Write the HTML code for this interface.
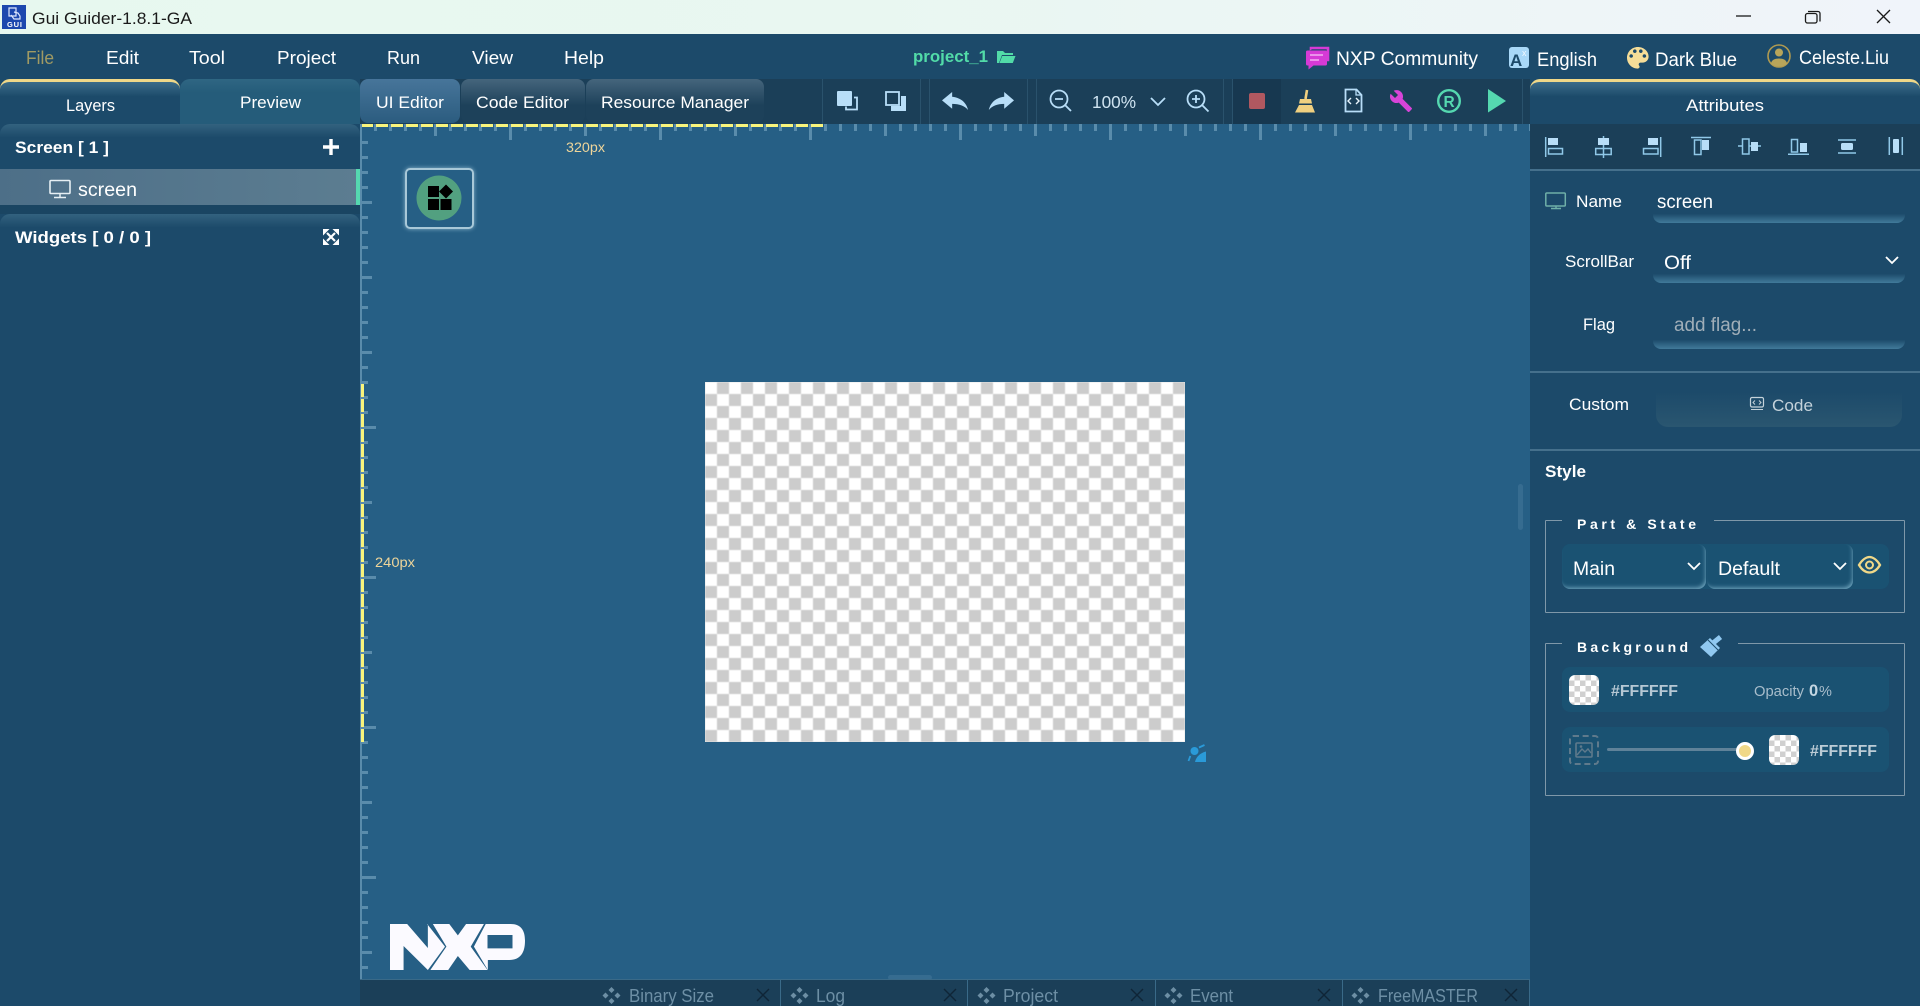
<!DOCTYPE html>
<html lang="en"><head><meta charset="utf-8"><title>Gui Guider-1.8.1-GA</title>
<style>
*{box-sizing:border-box}
html,body{margin:0;padding:0;width:1920px;height:1006px;overflow:hidden;background:#265f85;font-family:"Liberation Sans",sans-serif}
.b{position:absolute}
svg{position:absolute;left:0;top:0}
text{font-family:"Liberation Sans",sans-serif;fill:#fff}
.tk{background-repeat:no-repeat}
</style></head><body>
<div class="b" style="left:0;top:0;width:1920px;height:34px;background:linear-gradient(90deg,#e7f8ef 0,#e9f7f1 45%,#f0f4fa 100%)"></div>
<div class="b" style="left:0;top:34px;width:1920px;height:46px;background:#1c4a6a"></div>
<!-- canvas -->
<div class="b" style="left:360px;top:124px;width:1170px;height:855px;background:#265f85"></div>
<!-- toolbar -->
<div class="b" style="left:360px;top:79px;width:1170px;height:45px;background:#1b3f58"></div>
<div class="b" style="left:1233px;top:79px;width:48px;height:45px;background:#173850"></div>
<div class="b" style="left:360px;top:79px;width:100px;height:44px;border-radius:8px;background:linear-gradient(#47759a,#2b5c7f)"></div>
<div class="b" style="left:461px;top:79px;width:124px;height:44px;border-radius:8px;background:linear-gradient(#45657c 0,#1d415a 60%)"></div>
<div class="b" style="left:586px;top:79px;width:178px;height:44px;border-radius:8px;background:linear-gradient(#45657c 0,#1d415a 60%)"></div>
<div class="b" style="left:822px;top:79px;width:1px;height:45px;background:#2a526c"></div>
<div class="b" style="left:920px;top:79px;width:1px;height:45px;background:#2a526c"></div>
<div class="b" style="left:929px;top:79px;width:1px;height:45px;background:#2a526c"></div>
<div class="b" style="left:1027px;top:79px;width:1px;height:45px;background:#2a526c"></div>
<div class="b" style="left:1036px;top:79px;width:1px;height:45px;background:#2a526c"></div>
<div class="b" style="left:1223px;top:79px;width:1px;height:45px;background:#2a526c"></div>
<div class="b" style="left:1232px;top:79px;width:1px;height:45px;background:#2a526c"></div>
<div class="b" style="left:1522px;top:79px;width:1px;height:45px;background:#2a526c"></div>
<!-- rulers -->
<div class="b" style="left:359px;top:124px;width:1171px;height:7px;background:repeating-linear-gradient(90deg,#5a8cab 0 3px,transparent 3px 15px)"></div>
<div class="b" style="left:434px;top:124px;width:1096px;height:12px;background:repeating-linear-gradient(90deg,#5a8cab 0 3px,transparent 3px 75px)"></div>
<div class="b" style="left:509px;top:124px;width:1021px;height:16px;background:repeating-linear-gradient(90deg,#5a8cab 0 3px,transparent 3px 150px)"></div>
<div class="b" style="left:361px;top:124px;width:463px;height:3px;background:repeating-linear-gradient(90deg,#f8f47c 0 12px,transparent 12px 15px)"></div>
<div class="b" style="left:360px;top:124px;width:2px;height:855px;background:#5a8cab"></div>
<div class="b" style="left:360px;top:141px;width:8px;height:838px;background:repeating-linear-gradient(180deg,#5a8cab 0 3px,transparent 3px 15px)"></div>
<div class="b" style="left:360px;top:201px;width:12px;height:778px;background:repeating-linear-gradient(180deg,#5a8cab 0 3px,transparent 3px 75px)"></div>
<div class="b" style="left:360px;top:426px;width:16px;height:553px;background:repeating-linear-gradient(180deg,#5a8cab 0 3px,transparent 3px 150px)"></div>
<div class="b" style="left:361px;top:384px;width:2.500px;height:359px;background:repeating-linear-gradient(180deg,#f8f47c 0 13px,transparent 13px 15px)"></div>
<!-- left panel -->
<div class="b" style="left:0;top:79px;width:360px;height:927px;background:#1c4a6a"></div>
<div class="b" style="left:180px;top:79px;width:180px;height:45px;border-radius:10px 10px 0 0;background:linear-gradient(#2f6683 0,#255c7a 30%)"></div>
<div class="b" style="left:0;top:79px;width:180px;height:45px;border-radius:10px 10px 0 0;border-top:3px solid #f0d888;background:linear-gradient(#3b6c89 0,#1c4a6a 35%)"></div>
<div class="b" style="left:0;top:124px;width:360px;height:45px;border-radius:10px 10px 0 0;background:linear-gradient(#33627f 0,#1c4a6a 30%)"></div>
<div class="b" style="left:0;top:169px;width:360px;height:36px;background:linear-gradient(90deg,#4d6f88,#5c7d91)"></div>
<div class="b" style="left:356px;top:169px;width:4px;height:36px;background:#55d8b0"></div>
<div class="b" style="left:0;top:205px;width:360px;height:9px;background:#1a4562"></div>
<div class="b" style="left:0;top:214px;width:360px;height:45px;border-radius:10px 10px 0 0;background:linear-gradient(#33627f 0,#1c4a6a 30%)"></div>
<!-- right panel -->
<div class="b" style="left:1530px;top:79px;width:390px;height:927px;background:#1c4a6a"></div>
<div class="b" style="left:1530px;top:79px;width:390px;height:45px;border-radius:10px 10px 0 0;border-top:3px solid #f0d888;background:linear-gradient(#3b6c89 0,#1c4a6a 35%)"></div>
<div class="b" style="left:1530px;top:124px;width:390px;height:45px;background:#1b3f58"></div>
<div class="b" style="left:1530px;top:169px;width:390px;height:2px;background:#45708c"></div>
<div class="b" style="left:1653px;top:190px;width:252px;height:33px;border-radius:0 0 8px 8px;background:linear-gradient(transparent 72%,#417a9a 100%)"></div>
<div class="b" style="left:1653px;top:250px;width:252px;height:33px;border-radius:0 0 8px 8px;background:linear-gradient(transparent 72%,#417a9a 100%)"></div>
<div class="b" style="left:1653px;top:316px;width:252px;height:33px;border-radius:0 0 8px 8px;background:linear-gradient(transparent 72%,#417a9a 100%)"></div>
<div class="b" style="left:1530px;top:371px;width:390px;height:2px;background:#45708c"></div>
<div class="b" style="left:1656px;top:380px;width:246px;height:47px;border-radius:12px;background:linear-gradient(#1c4a6a 25%,#2a5670 100%)"></div>
<div class="b" style="left:1530px;top:449px;width:390px;height:2px;background:#45708c"></div>
<div class="b" style="left:1545px;top:520px;width:360px;height:93px;border:1px solid #7f98a9;border-radius:1px"></div>
<div class="b" style="left:1562px;top:518px;width:152px;height:5px;background:#1c4a6a"></div>
<div class="b" style="left:1562px;top:544px;width:327px;height:45px;border-radius:8px;background:#1a5272"></div>
<div class="b" style="left:1562px;top:544px;width:144px;height:45px;border-radius:8px;background:#1a5272;box-shadow:inset -2px -3px 5px -2px #79aec6"></div>
<div class="b" style="left:1707px;top:544px;width:146px;height:45px;border-radius:8px;background:#1a5272;box-shadow:inset -2px -3px 5px -2px #79aec6"></div>
<div class="b" style="left:1545px;top:643px;width:360px;height:153px;border:1px solid #7f98a9;border-radius:1px"></div>
<div class="b" style="left:1562px;top:641px;width:176px;height:5px;background:#1c4a6a"></div>
<div class="b" style="left:1562px;top:667px;width:327px;height:45px;border-radius:8px;background:#1a5272"></div>
<div class="b" style="left:1562px;top:727px;width:327px;height:45px;border-radius:8px;background:#1a5272"></div>
<div class="b" style="left:1569px;top:675px;width:30px;height:30px;border-radius:6px;background:repeating-conic-gradient(#d0d0d0 0 25%,#fff 0 50%) 0 0/11px 11px"></div>
<div class="b" style="left:1769px;top:735px;width:30px;height:30px;border-radius:6px;background:repeating-conic-gradient(#d0d0d0 0 25%,#fff 0 50%) 0 0/11px 11px"></div>
<div class="b" style="left:1569px;top:735px;width:30px;height:30px;border:2px dashed #5f7a8c;border-radius:4px"></div>
<div class="b" style="left:1607px;top:748px;width:134px;height:3px;background:#5f8299;border-radius:2px"></div>
<div class="b" style="left:1736px;top:742px;width:18px;height:18px;border-radius:50%;background:#f0d888;border:3px solid #fff"></div>
<!-- design image -->
<div class="b" style="left:705px;top:382px;width:480px;height:360px;overflow:hidden;background:#fff"><div style="position:absolute;left:-2px;top:-2px;right:-2px;bottom:-2px;filter:blur(.6px);background:repeating-conic-gradient(#ccc 0 25%,#fff 0 50%) 2px 2px/24px 24px"></div></div>
<!-- floating widget button -->
<div class="b" style="left:405px;top:168px;width:69px;height:61px;border:2px solid #a8c8d8;border-radius:5px;box-shadow:0 0 4px #8cb6cc"></div>
<!-- scroll thumbs -->
<div class="b" style="left:1518px;top:484px;width:5px;height:46px;border-radius:3px;background:#366c90"></div>
<div class="b" style="left:888px;top:975px;width:44px;height:5px;border-radius:3px;background:#366c90"></div>
<!-- bottom tabs -->
<div class="b" style="left:360px;top:979px;width:1170px;height:27px;background:#1b3f58;border-top:1px solid #3a6a88"></div>
<div class="b" style="left:780px;top:979px;width:1px;height:27px;background:#3a6a88"></div>
<div class="b" style="left:967px;top:979px;width:1px;height:27px;background:#3a6a88"></div>
<div class="b" style="left:1155px;top:979px;width:1px;height:27px;background:#3a6a88"></div>
<div class="b" style="left:1342px;top:979px;width:1px;height:27px;background:#3a6a88"></div>
<div class="b" style="left:1529px;top:979px;width:1px;height:27px;background:#3a6a88"></div>

<svg width="1920" height="1006" viewBox="0 0 1920 1006">
<!-- title bar -->
<rect x="2" y="5" width="24" height="24" fill="#1d48ae"/>
<path d="M9 8h7v8h-7zM14 12l4 1 2 3v3h-6l-3-4" fill="none" stroke="#dfe8ff" stroke-width="1.2"/>
<text x="7" y="27" font-size="7.5" font-weight="bold" textLength="15">GUI</text>
<text x="32" y="24" font-size="16.5" textLength="160" lengthAdjust="spacingAndGlyphs" style="fill:#1a1a1a">Gui Guider-1.8.1-GA</text>
<path d="M1736 16h15" stroke="#1a1a1a" stroke-width="1.3"/>
<path d="M1808 11.5h10a2 2 0 0 1 2 2v8" fill="none" stroke="#1a1a1a" stroke-width="1.3"/>
<rect x="1805.5" y="13.5" width="11.5" height="9.5" rx="2" fill="none" stroke="#1a1a1a" stroke-width="1.3"/>
<path d="M1877 10l13 13M1890 10l-13 13" stroke="#1a1a1a" stroke-width="1.3"/>

<!-- menu -->
<text x="26" y="64" font-size="18" textLength="28" lengthAdjust="spacingAndGlyphs" style="fill:#a09a63">File</text>
<text x="106" y="64" font-size="18" textLength="33" lengthAdjust="spacingAndGlyphs">Edit</text>
<text x="189" y="64" font-size="18" textLength="36" lengthAdjust="spacingAndGlyphs">Tool</text>
<text x="277" y="64" font-size="18" textLength="59" lengthAdjust="spacingAndGlyphs">Project</text>
<text x="387" y="64" font-size="18" textLength="33" lengthAdjust="spacingAndGlyphs">Run</text>
<text x="472" y="64" font-size="18" textLength="41" lengthAdjust="spacingAndGlyphs">View</text>
<text x="564" y="64" font-size="18" textLength="40" lengthAdjust="spacingAndGlyphs">Help</text>
<text x="913" y="62" font-size="17" font-weight="bold" textLength="75" lengthAdjust="spacingAndGlyphs" style="fill:#52dba8">project_1</text>
<path d="M997 63V51h6l2 2h8v2h-11l-3 8zM999.5 63l2.7-7h13.3l-2.7 7z" fill="#52dba8"/>
<path d="M1310 50v-3h19v14h-2V49h-15z" fill="#d63ad6" stroke="#d63ad6" stroke-width=".6"/>
<path d="M1306 52a1.5 1.5 0 0 1 1.5-1.5h18a1.5 1.5 0 0 1 1.5 1.5v12a1.5 1.5 0 0 1-1.5 1.5h-12l-5 4v-4h-1a1.5 1.5 0 0 1-1.5-1.5z" fill="#d63ad6"/>
<path d="M1310 55h13M1310 60h9" stroke="#f8c8f8" stroke-width="1.3"/>
<text x="1336" y="65" font-size="19" textLength="142" lengthAdjust="spacingAndGlyphs">NXP Community</text>
<rect x="1509" y="47" width="20" height="21" rx="3" fill="#a8d8f8"/>
<text x="1510" y="66" font-size="17" font-weight="bold" style="fill:#1c4a6a">A</text>
<text x="1522" y="56" font-size="9" style="fill:#f0f8ff">x</text>
<text x="1537" y="66" font-size="19" textLength="60" lengthAdjust="spacingAndGlyphs">English</text>
<path transform="translate(1623.4 43.4) scale(1.2)" fill="#f5dd98" d="M12 3c-4.97 0-9 4.03-9 9s4.03 9 9 9c.83 0 1.5-.67 1.5-1.5 0-.39-.15-.74-.39-1.01-.23-.26-.38-.61-.38-.99 0-.83.67-1.5 1.5-1.5H16c2.76 0 5-2.24 5-5 0-4.42-4.03-8-9-8zm-5.5 9c-.83 0-1.5-.67-1.5-1.5S5.67 9 6.5 9 8 9.67 8 10.5 7.33 12 6.5 12zm3-4C8.67 8 8 7.33 8 6.5S8.67 5 9.5 5s1.5.67 1.5 1.5S10.33 8 9.5 8zm5 0c-.83 0-1.5-.67-1.5-1.5S13.67 5 14.5 5s1.5.67 1.5 1.5S15.33 8 14.5 8zm3 4c-.83 0-1.5-.67-1.5-1.5S16.67 9 17.5 9s1.5.67 1.5 1.5-.67 1.5-1.5 1.5z"/>
<text x="1655" y="66" font-size="19" textLength="82" lengthAdjust="spacingAndGlyphs">Dark Blue</text>
<circle cx="1779" cy="56" r="11" fill="none" stroke="#b09a50" stroke-width="1.6"/>
<circle cx="1779" cy="52.5" r="4" fill="#b8a55a"/>
<path d="M1771 64c0-4 4-5.500 8-5.500s8 1.500 8 5.500c-2 1.500-5 2.500-8 2.500s-6-1-8-2.500z" fill="#b8a55a"/>
<text x="1799" y="64" font-size="19" textLength="90" lengthAdjust="spacingAndGlyphs">Celeste.Liu</text>

<!-- side tabs -->
<text x="66" y="111" font-size="17" textLength="49" lengthAdjust="spacingAndGlyphs">Layers</text>
<text x="240" y="108" font-size="17" textLength="61" lengthAdjust="spacingAndGlyphs">Preview</text>
<text x="376" y="108" font-size="17" textLength="68" lengthAdjust="spacingAndGlyphs">UI Editor</text>
<text x="476" y="108" font-size="17" textLength="93" lengthAdjust="spacingAndGlyphs">Code Editor</text>
<text x="601" y="108" font-size="17" textLength="148" lengthAdjust="spacingAndGlyphs">Resource Manager</text>
<text x="15" y="153" font-size="17" font-weight="bold" textLength="94" lengthAdjust="spacingAndGlyphs">Screen [ 1 ]</text>
<path d="M323 147h16M331 139v16" stroke="#fff" stroke-width="3.4"/>
<rect x="50" y="180.500" width="20" height="13" rx="1" fill="none" stroke="#e6eff4" stroke-width="1.6"/>
<path d="M60 194v3M54 197.500h12" stroke="#e6eff4" stroke-width="1.5"/>
<text x="78" y="196" font-size="19.500" textLength="59" lengthAdjust="spacingAndGlyphs">screen</text>
<text x="15" y="243" font-size="17" font-weight="bold" textLength="136" lengthAdjust="spacingAndGlyphs">Widgets [ 0 / 0 ]</text>
<path d="M327 233l8 8M335 233l-8 8" stroke="#fff" stroke-width="2.200"/>
<path d="M323 229h6.500l-6.500 6.500zM339 229h-6.500l6.500 6.500zM323 245h6.500l-6.500-6.500zM339 245h-6.500l6.500-6.500z" fill="#fff"/>

<!-- toolbar icons -->
<path d="M846 106.500v3h11v-12h-3" fill="none" stroke="#b8def8" stroke-width="1.800"/>
<rect x="837" y="91" width="15" height="15" rx="1" fill="#b8def8"/>
<rect x="886" y="92" width="13" height="13" fill="none" stroke="#b8def8" stroke-width="1.800"/>
<path d="M901 96h5v15h-15v-5h10z" fill="#b8def8"/>
<path transform="translate(937.650 86) scale(1.45 1.2)" fill="#b8def8" d="M10 9V5l-7 7 7 7v-4.100c5 0 8.500 1.600 11 5.100-1-5-4-10-11-11z"/>
<path transform="translate(1018.200 86) scale(-1.4 1.2)" fill="#b8def8" d="M10 9V5l-7 7 7 7v-4.100c5 0 8.500 1.600 11 5.100-1-5-4-10-11-11z"/>
<circle cx="1059" cy="99" r="8.500" fill="none" stroke="#b8def8" stroke-width="1.800"/>
<path d="M1065 105l6 6M1055 99h8" stroke="#b8def8" stroke-width="1.800"/>
<text x="1092" y="108" font-size="17.500" textLength="44" lengthAdjust="spacingAndGlyphs" style="fill:#cfe3f0">100%</text>
<path d="M1151 98l7 7 7-7" fill="none" stroke="#b8def8" stroke-width="1.800"/>
<circle cx="1196" cy="99" r="8.500" fill="none" stroke="#b8def8" stroke-width="1.800"/>
<path d="M1202 105l6.500 6.500M1192 99h8M1196 95v8" stroke="#b8def8" stroke-width="1.800"/>
<rect x="1249" y="93" width="16" height="16" rx="2" fill="#b05860"/>
<path d="M1307 90l-1.500 9" stroke="#f0d080" stroke-width="2.600"/>
<path d="M1300 99h11l1 4.500h-13z" fill="#f0d080"/>
<path d="M1299 105h13l3 7.500h-20z" fill="#f0d080"/>
<path d="M1345.500 89.500h11l5 5.500v16.500h-16z" fill="none" stroke="#b8def8" stroke-width="1.800"/>
<path d="M1356 90v5h5" fill="none" stroke="#b8def8" stroke-width="1.300"/>
<path d="M1351 98l-3 3 3 3M1356 98l3 3-3 3" fill="none" stroke="#e8f4fc" stroke-width="1.400"/>
<path transform="translate(1389 89)" fill="#d844d8" d="M22.700 19l-9.100-9.100c.9-2.300.4-5-1.500-6.900-2-2-5-2.400-7.400-1.300L9 6 6 9 1.600 4.700C.4 7.100.9 10.100 2.900 12.100c1.900 1.900 4.600 2.400 6.900 1.500l9.100 9.100c.4.4 1 .4 1.400 0l2.300-2.300c.5-.4.5-1.100.1-1.400z"/>
<circle cx="1449" cy="101" r="10.800" fill="none" stroke="#55d8b0" stroke-width="2.400"/>
<text x="1443.500" y="107" font-size="15.500" font-weight="bold" style="fill:#55d8b0">R</text>
<path d="M1488 89l18 12-18 11.500z" fill="#55d8b0"/>

<!-- rulers labels -->
<text x="566" y="152" font-size="14" textLength="39" lengthAdjust="spacingAndGlyphs" style="fill:#eed59a">320px</text>
<text x="375" y="567" font-size="14" textLength="40" lengthAdjust="spacingAndGlyphs" style="fill:#eed59a">240px</text>

<!-- widget button -->
<circle cx="439" cy="198" r="22.500" fill="#52a080"/>
<rect x="428" y="186" width="11" height="11" fill="#000"/>
<rect x="428" y="199" width="11" height="11" fill="#000"/>
<rect x="440.500" y="199" width="11" height="11" fill="#000"/>
<path d="M446 184.500l7 7-7 7-7-7z" fill="#000"/>

<!-- resize handle -->
<circle cx="1194.500" cy="751" r="4" fill="#2a9ad8"/>
<path d="M1195 762c1-5 5-9 11-10.500v10.500z" fill="#2a9ad8"/>
<path d="M1199 747.500l5.500-2.500M1188.500 761l1.800-5" stroke="#2a9ad8" stroke-width="1.800"/>

<!-- NXP logo -->
<svg x="350" y="880" width="560" height="126" viewBox="0 0 1568 378" preserveAspectRatio="none">
<path fill="#fbfaff" d="M112 132h48l58 72V132h-2l50 68-48 70-68-72v72h-38z"/>
<path fill="#fbfaff" d="M232 132h46l24 34 23-34h50l-37 68 47 70h-50l-33-42-27 42h-50l45-70z"/>
<path fill="#fbfaff" fill-rule="evenodd" d="M380 132h70c28 0 40 18 40 50 0 38-14 58-44 58h-60v30l-39-70zM385 165v40h70v-40z"/>
</svg>

<!-- bottom tabs -->
<g fill="#6d8fa5">
<path d="M611.500 987l3 3-3 3-3-3zM611.500 998l3 3-3 3-3-3zM605.500 992.500l3 3-3 3-3-3zM617.500 992.500l3 3-3 3-3-3z"/>
<path transform="translate(188 0)" d="M611.500 987l3 3-3 3-3-3zM611.500 998l3 3-3 3-3-3zM605.500 992.500l3 3-3 3-3-3zM617.500 992.500l3 3-3 3-3-3z"/>
<path transform="translate(375 0)" d="M611.500 987l3 3-3 3-3-3zM611.500 998l3 3-3 3-3-3zM605.500 992.500l3 3-3 3-3-3zM617.500 992.500l3 3-3 3-3-3z"/>
<path transform="translate(562 0)" d="M611.500 987l3 3-3 3-3-3zM611.500 998l3 3-3 3-3-3zM605.500 992.500l3 3-3 3-3-3zM617.500 992.500l3 3-3 3-3-3z"/>
<path transform="translate(749 0)" d="M611.500 987l3 3-3 3-3-3zM611.500 998l3 3-3 3-3-3zM605.500 992.500l3 3-3 3-3-3zM617.500 992.500l3 3-3 3-3-3z"/>
</g>
<text x="629" y="1002" font-size="18" textLength="85" lengthAdjust="spacingAndGlyphs" style="fill:#6d8fa5">Binary Size</text>
<text x="816" y="1002" font-size="18" textLength="29" lengthAdjust="spacingAndGlyphs" style="fill:#6d8fa5">Log</text>
<text x="1003" y="1002" font-size="18" textLength="55" lengthAdjust="spacingAndGlyphs" style="fill:#6d8fa5">Project</text>
<text x="1190" y="1002" font-size="18" textLength="43" lengthAdjust="spacingAndGlyphs" style="fill:#6d8fa5">Event</text>
<text x="1378" y="1002" font-size="18" textLength="100" lengthAdjust="spacingAndGlyphs" style="fill:#6d8fa5">FreeMASTER</text>
<g stroke="#0f2537" stroke-width="1.400">
<path d="M757 989l12 12M769 989l-12 12"/>
<path d="M944 989l12 12M956 989l-12 12"/>
<path d="M1131 989l12 12M1143 989l-12 12"/>
<path d="M1318 989l12 12M1330 989l-12 12"/>
<path d="M1505 989l12 12M1517 989l-12 12"/>
</g>

<!-- attributes -->
<text x="1686" y="111" font-size="17" textLength="78" lengthAdjust="spacingAndGlyphs">Attributes</text>
<g fill="none" stroke="#90c8e8" stroke-width="1.500">
<path d="M1545.700 137v20"/><rect x="1548.500" y="148.500" width="14" height="5.500"/>
<path d="M1603.500 136v22"/><rect x="1595.700" y="148.500" width="15.500" height="6"/>
<path d="M1660.700 137v20"/><rect x="1643.500" y="148.500" width="14.500" height="5.500"/>
<path d="M1691 137.500h20"/><rect x="1694.500" y="140" width="6.500" height="14.500"/>
<path d="M1738 146h23"/><rect x="1742.500" y="139" width="6.500" height="15" fill="#1b3f58"/>
<path d="M1788 154.300h21"/><rect x="1791.500" y="139.500" width="6" height="12.500"/>
<path d="M1838 140h18M1838 153h18"/>
<path d="M1889.300 137v18M1902.300 137v18"/>
</g>
<g fill="#b8def8">
<rect x="1548" y="138" width="10" height="7"/>
<rect x="1598" y="138" width="11" height="7"/>
<rect x="1648" y="138" width="10" height="7"/>
<rect x="1702" y="140" width="7" height="10"/>
<rect x="1751" y="142" width="7" height="9"/>
<rect x="1800" y="143" width="7" height="9"/>
<rect x="1841" y="143" width="12" height="7" rx="1.500"/>
<rect x="1893" y="139" width="6" height="14" rx="1"/>
</g>
<rect x="1545.800" y="193" width="19.500" height="13" rx="1" fill="none" stroke="#6fb0a8" stroke-width="1.500"/>
<path d="M1556 206v2.500M1551 208.500h10" stroke="#6fb0a8" stroke-width="1.400"/>
<text x="1576" y="207" font-size="17" textLength="46" lengthAdjust="spacingAndGlyphs">Name</text>
<text x="1657" y="208" font-size="19" textLength="56" lengthAdjust="spacingAndGlyphs">screen</text>
<text x="1565" y="267" font-size="17" textLength="69" lengthAdjust="spacingAndGlyphs">ScrollBar</text>
<text x="1664" y="269" font-size="19" textLength="27" lengthAdjust="spacingAndGlyphs">Off</text>
<path d="M1886 257l6 6 6-6" fill="none" stroke="#fff" stroke-width="1.800"/>
<text x="1583" y="330" font-size="17" textLength="32" lengthAdjust="spacingAndGlyphs">Flag</text>
<text x="1674" y="331" font-size="19" textLength="83" lengthAdjust="spacingAndGlyphs" style="fill:#a0aeb8">add flag...</text>
<text x="1569" y="410" font-size="17" textLength="60" lengthAdjust="spacingAndGlyphs">Custom</text>
<rect x="1750.500" y="397.500" width="13" height="9.500" rx="1.500" fill="none" stroke="#c4d2da" stroke-width="1.200"/>
<path d="M1755 400.500l-2 2 2 2M1759 400.500l2 2-2 2M1751 409.500h12" fill="none" stroke="#c4d2da" stroke-width="1"/>
<text x="1772" y="411" font-size="17" textLength="41" lengthAdjust="spacingAndGlyphs" style="fill:#c4d2da">Code</text>
<text x="1545" y="477" font-size="17" font-weight="bold" textLength="41" lengthAdjust="spacingAndGlyphs">Style</text>
<text x="1577" y="529" font-size="14" font-weight="bold" textLength="119" lengthAdjust="spacing">Part &amp; State</text>
<text x="1573" y="575" font-size="19" textLength="42" lengthAdjust="spacingAndGlyphs">Main</text>
<path d="M1688 563l6 6 6-6" fill="none" stroke="#fff" stroke-width="1.800"/>
<text x="1718" y="575" font-size="19" textLength="62" lengthAdjust="spacingAndGlyphs">Default</text>
<path d="M1834 563l6 6 6-6" fill="none" stroke="#fff" stroke-width="1.800"/>
<path d="M1859 565c3-5 7-8 10.500-8s7.500 3 10.500 8c-3 5-7 7.500-10.500 7.500s-7.500-2.500-10.500-7.500z" fill="none" stroke="#f0d888" stroke-width="2.300"/>
<circle cx="1869.500" cy="565" r="3.500" fill="none" stroke="#f0d888" stroke-width="2"/>
<text x="1577" y="652" font-size="14" font-weight="bold" textLength="111" lengthAdjust="spacing">Background</text>
<path d="M1700 647l10-9 10 10-9 9z" fill="#90c8f0"/>
<path d="M1712.500 643.500l8-6.500" stroke="#90c8f0" stroke-width="5"/>
<path d="M1708 640l10 10" stroke="#1c4a6a" stroke-width="1"/>
<text x="1611" y="696" font-size="16" font-weight="bold" textLength="67" lengthAdjust="spacingAndGlyphs" style="fill:#b6c8d4">#FFFFFF</text>
<text x="1754" y="696" font-size="15" textLength="50" lengthAdjust="spacingAndGlyphs" style="fill:#a8bdcb">Opacity</text>
<text x="1809" y="696" font-size="16.500" font-weight="bold" style="fill:#c4d6e2">0</text>
<text x="1819" y="696" font-size="14.500" style="fill:#a8bdcb">%</text>
<rect x="1576" y="743" width="16" height="14" rx="1" fill="none" stroke="#5f7a8c" stroke-width="1.600"/>
<path d="M1577 755l5-6 3 3 3-3 3 4" fill="none" stroke="#5f7a8c" stroke-width="1.400"/>
<circle cx="1581" cy="746.500" r="1.300" fill="#5f7a8c"/>
<text x="1810" y="756" font-size="16" font-weight="bold" textLength="67" lengthAdjust="spacingAndGlyphs" style="fill:#bcccd6">#FFFFFF</text>
</svg>
</body></html>
